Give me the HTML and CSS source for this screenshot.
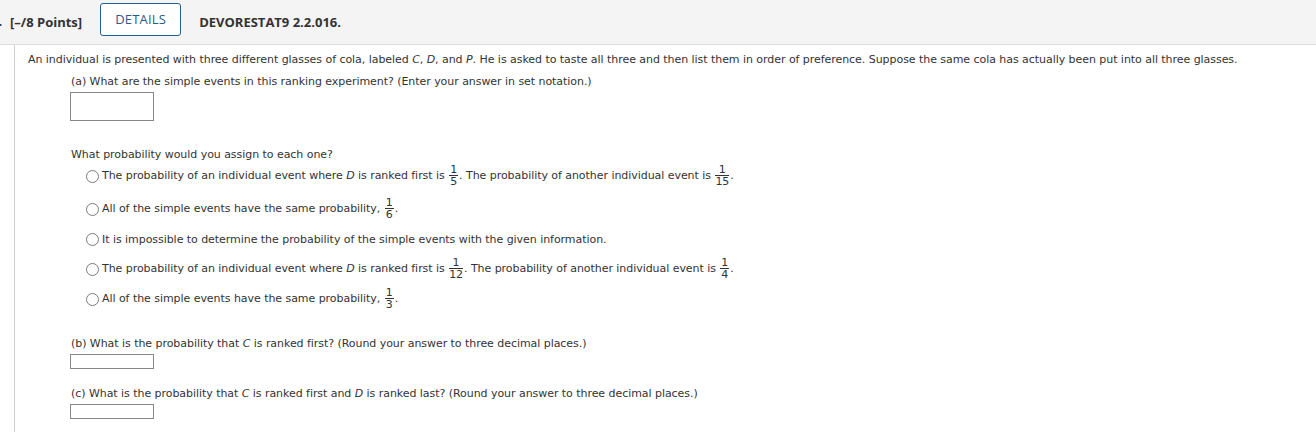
FILE: index.html
```html
<!DOCTYPE html>
<html>
<head>
<meta charset="utf-8">
<link rel="stylesheet" href="styles.css">
</head>
<body>
<div class="header">
  <span class="num">1.</span>
  <span class="points">[–/8 Points]</span>
  <span class="details">DETAILS</span>
  <span class="code">DEVORESTAT9 2.2.016.</span>
</div>
<div class="content">
  <p class="intro">An individual is presented with three different glasses of cola, labeled <i>C</i>, <i>D</i>, and <i>P</i>. He is asked to taste all three and then list them in order of preference. Suppose the same cola has actually been put into all three glasses.</p>
  <div class="part">
    <p class="q">(a) What are the simple events in this ranking experiment? (Enter your answer in set notation.)</p>
    <div class="box tall"></div>
    <p class="q prob">What probability would you assign to each one?</p>
    <div class="options">
      <div class="opt first"><span class="radio"></span><span>The probability of an individual event where <i>D</i> is ranked first is <span class="frac"><span class="n">1</span><span class="d">5</span></span>. The probability of another individual event is <span class="frac"><span class="n">1</span><span class="d">15</span></span>.</span></div>
      <div class="opt"><span class="radio"></span><span>All of the simple events have the same probability, <span class="frac"><span class="n">1</span><span class="d">6</span></span>.</span></div>
      <div class="opt"><span class="radio"></span><span>It is impossible to determine the probability of the simple events with the given information.</span></div>
      <div class="opt"><span class="radio"></span><span>The probability of an individual event where <i>D</i> is ranked first is <span class="frac"><span class="n">1</span><span class="d">12</span></span>. The probability of another individual event is <span class="frac"><span class="n">1</span><span class="d">4</span></span>.</span></div>
      <div class="opt"><span class="radio"></span><span>All of the simple events have the same probability, <span class="frac"><span class="n">1</span><span class="d">3</span></span>.</span></div>
    </div>
    <p class="q pb">(b) What is the probability that <i>C</i> is ranked first? (Round your answer to three decimal places.)</p>
    <div class="box short"></div>
    <p class="q pc">(c) What is the probability that <i>C</i> is ranked first and <i>D</i> is ranked last? (Round your answer to three decimal places.)</p>
    <div class="box short"></div>
  </div>
</div>
</body>
</html>
```

FILE: styles.css
```css
html, body {
  margin: 0;
  padding: 0;
  background: #fff;
}
body {
  width: 1316px;
  height: 432px;
  overflow: hidden;
}
.header {
  height: 44px;
  background: #f4f4f4;
  border-bottom: 1px solid #dcdcdc;
  display: flex;
  align-items: center;
  font-family: "Open Sans", "Liberation Sans", sans-serif;
  font-size: 13px;
  color: #333;
  position: relative;
}
.num {
  position: absolute;
  left: -9px;
  top: 12px;
  font-weight: 700;
}
.points {
  font-weight: 700;
  margin-left: 10px;
}
.details {
  margin-left: 18px;
  box-sizing: border-box;
  width: 81px;
  height: 33px;
  border: 1px solid #1f6196;
  border-radius: 3px;
  display: flex;
  align-items: center;
  justify-content: center;
  color: #2b5c86;
  font-weight: 500;
  letter-spacing: 0.2px;
  margin-top: -6px;
  background: #fff;
}
.code {
  margin-left: 18px;
  font-weight: 700;
}
.content {
  margin-left: 14px;
  border-left: 1px solid #d0d0d0;
  padding-left: 13px;
  padding-top: 7px;
  height: 400px;
  font-family: "DejaVu Sans", Verdana, sans-serif;
  font-size: 11px;
  letter-spacing: -0.05px;
  color: #333;
}
p {
  margin: 0;
}
.intro {
  line-height: 16px;
}
.part {
  padding-left: 43px;
}
.q {
  line-height: 16px;
}
.part > .q:first-child {
  margin-top: 6px;
}
.box {
  width: 82px;
  border: 1px solid #888;
  margin-left: -1px;
  background: #fff;
}
.box.tall {
  height: 27px;
  margin-top: 2px;
}
.box.short {
  height: 13px;
  margin-top: 2px;
}
.prob {
  margin-top: 27px;
  line-height: 14px;
}
.options {
  display: flex;
  flex-direction: column;
  gap: 2px;
  padding-left: 15px;
}
.opt {
  height: 28px;
  display: flex;
  align-items: center;
}
.opt.first {
  margin-bottom: 3px;
}
.radio {
  width: 11px;
  height: 11px;
  border: 1px solid #7a7a7a;
  border-radius: 50%;
  margin-right: 3px;
  flex: none;
  background: #fff;
}
.frac {
  display: inline-flex;
  flex-direction: column;
  align-items: center;
  vertical-align: middle;
  font-size: 11px;
  line-height: 10px;
  margin: 0 1px;
}
.frac .n {
  border-bottom: 1px solid #333;
  padding: 0 1px;
  align-self: stretch;
  text-align: center;
}
.frac .d {
  padding-top: 1px;
}
.pb {
  margin-top: 23px;
}
.pc {
  margin-top: 17px;
}
```
